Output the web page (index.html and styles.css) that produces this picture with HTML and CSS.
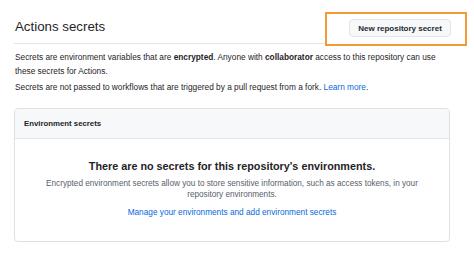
FILE: index.html
```html
<!DOCTYPE html>
<html lang="en">
<head>
<meta charset="utf-8">
<title>Actions secrets</title>
<link rel="stylesheet" href="styles.css">
</head>
<body>
<div class="page">
  <div class="subhead">
    <h2 class="subhead-title">Actions secrets</h2>
    <div class="highlight">
      <button class="btn" type="button">New repository secret</button>
    </div>
  </div>
  <p class="note">Secrets are environment variables that are <strong>encrypted</strong>. Anyone with <strong>collaborator</strong> access to this repository can use these secrets for Actions.</p>
  <p class="note note-last">Secrets are not passed to workflows that are triggered by a pull request from a fork. <a class="link" href="#">Learn more</a>.</p>
  <div class="box">
    <div class="box-header">Environment secrets</div>
    <div class="blankslate">
      <h3 class="blank-title">There are no secrets for this repository's environments.</h3>
      <p class="blank-desc">Encrypted environment secrets allow you to store sensitive information, such as access tokens, in your<br>repository environments.</p>
      <a class="blank-link" href="#">Manage your environments and add environment secrets</a>
    </div>
  </div>
</div>
</body>
</html>
```
FILE: styles.css
```css
* { box-sizing: border-box; }
body {
  margin: 0;
  background: #ffffff;
  font-family: "Liberation Sans", Arial, sans-serif;
  color: #1f2328;
}
.page {
  position: relative;
  width: 436px;
  margin-left: 14px;
}
.subhead {
  height: 44px;
  border-bottom: 1px solid #e3e6ea;
  display: flex;
  align-items: flex-start;
}
.subhead-title {
  margin: 18px 0 0 1px;
  font-size: 13.3px;
  line-height: 18px;
  font-weight: 400;
}
.highlight {
  position: absolute;
  left: 311px;
  top: 12px;
  width: 142px;
  height: 34px;
  border: 2px solid #f39a35;
  background: #ffffff;
  display: flex;
  align-items: center;
  justify-content: flex-end;
  padding: 0 14px 2px 0;
}
.btn {
  width: 102px;
  height: 18px;
  padding: 0;
  border: 1px solid #e3e6ea;
  border-radius: 4px;
  background: #f6f8fa;
  color: #24292f;
  font-family: inherit;
  font-size: 8px;
  font-weight: 700;
}
.note {
  margin: 7px 0 0 1px;
  font-size: 8.3px;
  line-height: 13.5px;
}
.note-last { margin-top: 3px; }
.link { color: #0969da; text-decoration: none; }
.box {
  margin-top: 13px;
  border: 1px solid #dde1e6;
  border-radius: 4px;
  box-shadow: 0 1px 2px rgba(0,0,0,0.04);
  overflow: hidden;
}
.box-header {
  height: 30px;
  padding-left: 9px;
  background: #f6f8fa;
  border-bottom: 1px solid #e3e6ea;
  display: flex;
  align-items: center;
  font-size: 7.8px;
  font-weight: 700;
}
.blankslate {
  padding: 21px 20px 23px;
  text-align: center;
}
.blank-title {
  margin: 0;
  font-size: 10.8px;
  line-height: 13px;
  font-weight: 700;
}
.blank-desc {
  margin: 5px 0 0;
  font-size: 8.2px;
  line-height: 11px;
  color: #57606a;
}
.blank-link {
  display: block;
  margin-top: 7px;
  font-size: 8.25px;
  line-height: 11px;
  color: #0969da;
  text-decoration: none;
}
```
